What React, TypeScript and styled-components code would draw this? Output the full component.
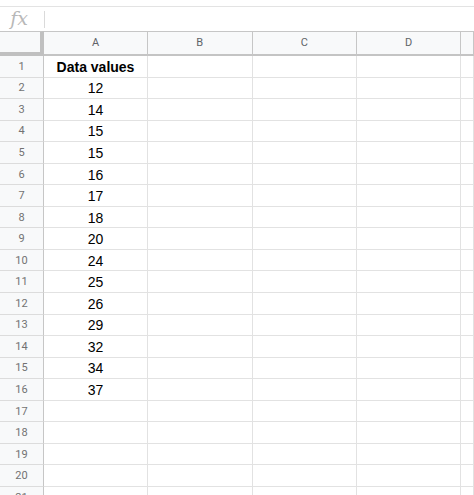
import React from "react";
import styled, { createGlobalStyle } from "styled-components";

const Global = createGlobalStyle`
  html, body { margin: 0; padding: 0; background: #ffffff; }
  body { font-family: "Liberation Sans", Arial, sans-serif; overflow: hidden; }
  * { box-sizing: border-box; }
`;

const Page = styled.div`
  width: 474px;
  height: 495px;
  overflow: hidden;
  background: #fff;
  padding-top: 6px;
`;

const FormulaBar = styled.div`
  height: 25px;
  border-top: 1px solid #e3e3e3;
  display: flex;
  align-items: center;
`;

const FxLabel = styled.div`
  width: 44px;
  display: flex;
  align-items: center;
  justify-content: center;
  padding-right: 6px;
  padding-bottom: 2px;
  font-family: "DejaVu Serif", "Liberation Serif", serif;
  font-style: italic;
  font-size: 19px;
  color: #b8b8b8;
  height: 100%;
`;

const Divider = styled.div`
  width: 1px;
  height: 17px;
  background: #dadada;
`;

const Sheet = styled.div`
  display: grid;
  grid-template-columns: 44px 104px 104.5px 104.5px 104px 1fr;
  grid-template-rows: 25px repeat(21, 21.56px);
`;

const Corner = styled.div`
  background: #f8f9fa;
  border-top: 1px solid #c6c6c6;
  border-right: 4px solid #c0c0c0;
  border-bottom: 4px solid #c0c0c0;
`;

const ColHead = styled.div`
  background: #f8f9fa;
  border-top: 1px solid #c6c6c6;
  border-right: 1px solid #c6c6c6;
  border-bottom: 2px solid #c4c4c4;
  display: flex;
  align-items: center;
  justify-content: center;
  font-family: Roboto, "Liberation Sans", sans-serif;
  font-size: 11px;
  color: #5f6368;
  padding-bottom: 1px;
`;

const RowHead = styled.div`
  background: #f8f9fa;
  border-right: 1px solid #c6c6c6;
  border-bottom: 1px solid #dcdcdc;
  display: flex;
  align-items: center;
  justify-content: center;
  font-family: Roboto, "Liberation Sans", sans-serif;
  font-size: 11px;
  color: #727272;
`;

const Cell = styled.div<{ $bold?: boolean }>`
  border-right: 1px solid #e2e2e2;
  border-bottom: 1px solid #e2e2e2;
  display: flex;
  align-items: center;
  justify-content: center;
  font-family: "Liberation Sans", Arial, sans-serif;
  font-size: 14px;
  font-weight: ${(p) => (p.$bold ? 700 : 400)};
  color: #000;
  white-space: nowrap;
  overflow: hidden;
  padding-top: 1px;
`;

const cols = ["A", "B", "C", "D", ""];
const values: (string | null)[] = [
  "Data values",
  "12", "14", "15", "15", "16", "17", "18", "20", "24", "25", "26", "29", "32", "34", "37",
];

export default function App() {
  const rows = Array.from({ length: 21 }, (_, i) => i + 1);
  return (
    <Page>
      <Global />
      <FormulaBar>
        <FxLabel>fx</FxLabel>
        <Divider />
      </FormulaBar>
      <Sheet>
        <Corner />
        {cols.map((c, i) => (
          <ColHead key={i}>{c}</ColHead>
        ))}
        {rows.map((r) => (
          <React.Fragment key={r}>
            <RowHead>{r}</RowHead>
            <Cell $bold={r === 1}>{values[r - 1] ?? ""}</Cell>
            <Cell />
            <Cell />
            <Cell />
            <Cell />
          </React.Fragment>
        ))}
      </Sheet>
    </Page>
  );
}
